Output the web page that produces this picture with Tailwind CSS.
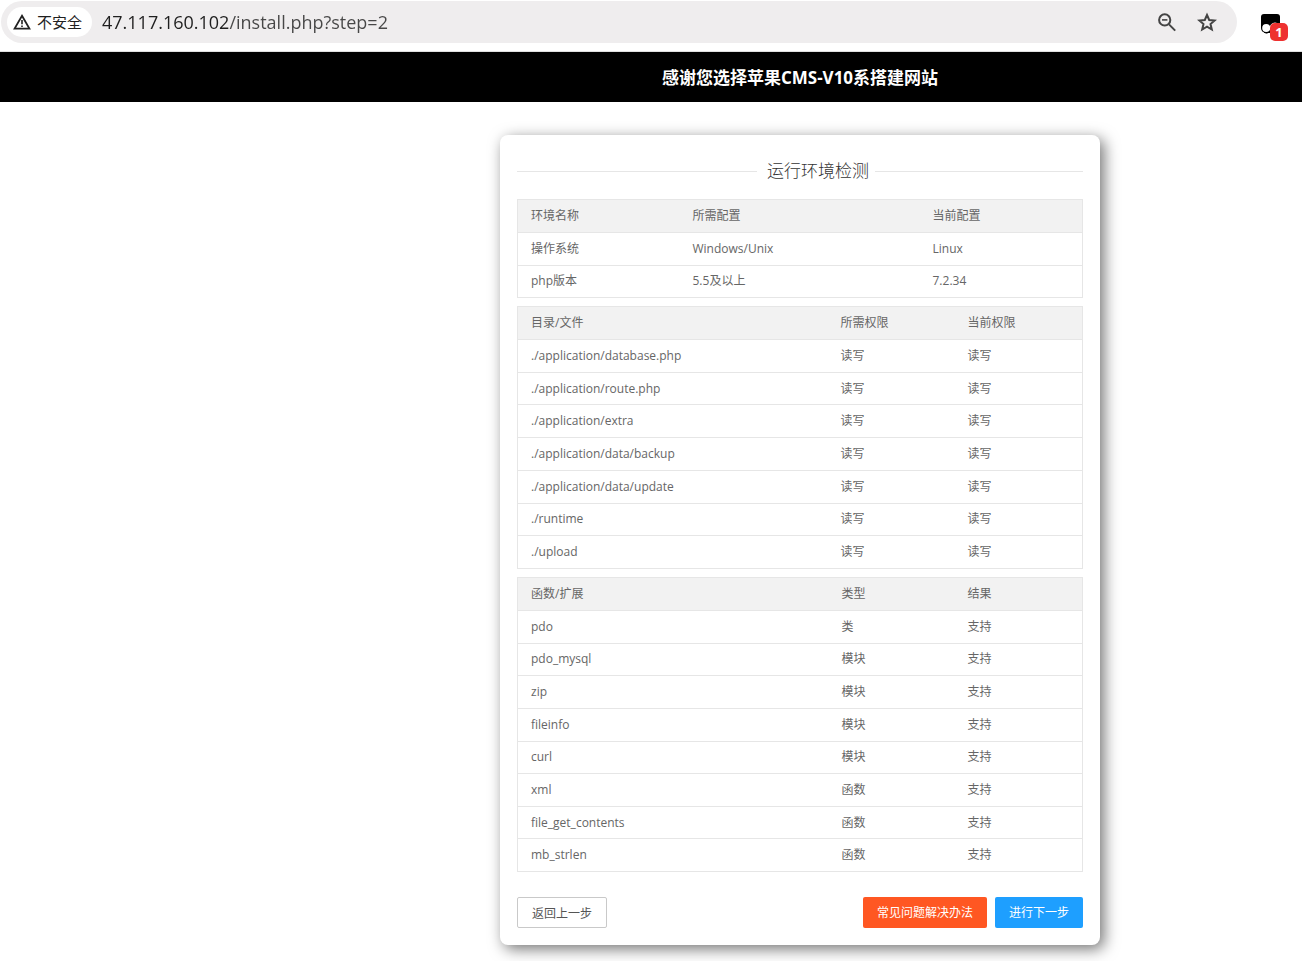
<!DOCTYPE html>
<html lang="zh-CN">
<head>
  <meta charset="UTF-8" />
  <title>运行环境检测</title>
  <script src="https://cdn.jsdelivr.net/npm/@tailwindcss/browser@4"></script>
</head>
<body class="bg-white overflow-x-hidden font-['Open_Sans','Noto_Sans_CJK_SC',sans-serif] text-[#666]">

  <!-- Address bar -->
  <div class="flex items-start gap-6 pt-px pl-px pr-3 h-[52px] border-b border-[#e0e0e0]">
    <div class="flex flex-1 items-center h-[42px] rounded-full bg-[#efedee] pl-1.5 pr-5">
      <button type="button" class="flex items-center gap-1.5 h-[30px] rounded-full bg-white pl-1.5 pr-2.5 text-[15px] leading-[30px] text-[#1f1f1f]">
        <svg class="w-[18px] h-4" viewBox="0 0 18 16" fill="none" stroke="#222" stroke-width="1.8">
          <path d="M9 1.8 16.4 14.6H1.6Z" />
          <path d="M9 6v4.2M9 11.4v1.6" stroke-width="1.6" />
        </svg>
        不安全
      </button>
      <!-- host part is darker than the path -->
      <input type="text" aria-label="地址" value="47.117.160.102/install.php?step=2" class="flex-1 h-[42px] pl-2.5 text-lg leading-[42px] outline-none text-transparent bg-clip-text bg-[linear-gradient(90deg,#1f1f1f_137px,#474747_137px)]" />
      <button type="button" aria-label="缩放" class="mr-5">
        <svg class="size-5" viewBox="0 0 20 20" fill="none" stroke="#444" stroke-width="2">
          <circle cx="7.7" cy="7.9" r="5.6" />
          <path d="M12 12.4l6.2 6.2" />
          <path d="M5 7.9h5.4" stroke-width="1.6" />
        </svg>
      </button>
      <button type="button" aria-label="收藏">
        <svg class="size-5" viewBox="0 0 20 20" fill="none" stroke="#444" stroke-width="2">
          <path d="M10 3l2.2 5 5.5.5-4.2 3.6 1.3 5.4-4.8-2.9-4.8 2.9 1.3-5.4L2.3 8.5l5.5-.5Z" />
        </svg>
      </button>
    </div>
    <button type="button" aria-label="扩展程序" class="relative flex items-start pt-0.5 mt-[11px] w-[29px] h-7">
      <svg class="size-5" viewBox="0 0 20 20">
        <path d="M3 0h13a3 3 0 0 1 3 3v13a3 3 0 0 1-3 3H5a5 5 0 0 1-5-5V3a3 3 0 0 1 3-3Z" fill="#000" />
        <circle cx="5.2" cy="14" r="4" fill="#fff" />
        <circle cx="14" cy="14" r="5.4" fill="#fff" />
        <path d="M3 18.3a4.5 4.5 0 0 0 5 0" fill="none" stroke="#000" stroke-width="1" />
      </svg>
      <span class="absolute left-[9px] top-[11px] w-[18px] h-[18px] rounded-[5px] bg-[#ee3130] text-white text-[13px] leading-[18px] font-bold text-center">1</span>
    </button>
  </div>

  <!-- Installer, centred on a page at least 1600px wide -->
  <div class="min-w-[1600px]">
    <h1 class="h-[50px] bg-black text-white text-[17px] leading-[52px] font-bold text-center">感谢您选择苹果CMS-V10系搭建网站</h1>

    <main class="w-[600px] mx-auto mt-[33px] mb-4 px-[17px] pt-5 pb-[17px] rounded-lg bg-white shadow-[4px_4px_15px_rgba(0,0,0,0.55)]">
      <h2 class="flex items-center gap-1.5 text-[17px] leading-8 font-light text-[#333]">
        <span class="w-60 h-px bg-[#e6e6e6]"></span>
        <span class="pl-1">运行环境检测</span>
        <span class="flex-1 h-px bg-[#e6e6e6]"></span>
      </h2>

      <table class="w-full h-[99px] mt-3 table-fixed border border-[#e6e6e6] text-xs leading-5 text-left [&_tr]:border-b [&_tr]:border-[#e6e6e6] [&_td]:px-[13px] [&_th]:px-[13px] [&_th]:h-[33px] [&_th]:font-normal">
        <colgroup><col class="w-[162px]" /><col class="w-60" /><col /></colgroup>
        <thead class="bg-[#f2f2f2]">
          <tr><th>环境名称</th><th>所需配置</th><th>当前配置</th></tr>
        </thead>
        <tbody>
          <tr><td>操作系统</td><td>Windows/Unix</td><td>Linux</td></tr>
          <tr><td>php版本</td><td>5.5及以上</td><td>7.2.34</td></tr>
        </tbody>
      </table>

      <table class="w-full h-[263px] mt-2 table-fixed border border-[#e6e6e6] text-xs leading-5 text-left [&_tr]:border-b [&_tr]:border-[#e6e6e6] [&_td]:px-[13px] [&_th]:px-[13px] [&_th]:h-[33px] [&_th]:font-normal">
        <colgroup><col class="w-[310px]" /><col class="w-[127px]" /><col /></colgroup>
        <thead class="bg-[#f2f2f2]">
          <tr><th>目录/文件</th><th>所需权限</th><th>当前权限</th></tr>
        </thead>
        <tbody>
          <tr><td>./application/database.php</td><td>读写</td><td>读写</td></tr>
          <tr><td>./application/route.php</td><td>读写</td><td>读写</td></tr>
          <tr><td>./application/extra</td><td>读写</td><td>读写</td></tr>
          <tr><td>./application/data/backup</td><td>读写</td><td>读写</td></tr>
          <tr><td>./application/data/update</td><td>读写</td><td>读写</td></tr>
          <tr><td>./runtime</td><td>读写</td><td>读写</td></tr>
          <tr><td>./upload</td><td>读写</td><td>读写</td></tr>
        </tbody>
      </table>

      <table class="w-full h-[295px] mt-2 table-fixed border border-[#e6e6e6] text-xs leading-5 text-left [&_tr]:border-b [&_tr]:border-[#e6e6e6] [&_td]:px-[13px] [&_th]:px-[13px] [&_th]:h-[33px] [&_th]:font-normal">
        <colgroup><col class="w-[311px]" /><col class="w-[126px]" /><col /></colgroup>
        <thead class="bg-[#f2f2f2]">
          <tr><th>函数/扩展</th><th>类型</th><th>结果</th></tr>
        </thead>
        <tbody>
          <tr><td>pdo</td><td>类</td><td>支持</td></tr>
          <tr><td>pdo_mysql</td><td>模块</td><td>支持</td></tr>
          <tr><td>zip</td><td>模块</td><td>支持</td></tr>
          <tr><td>fileinfo</td><td>模块</td><td>支持</td></tr>
          <tr><td>curl</td><td>模块</td><td>支持</td></tr>
          <tr><td>xml</td><td>函数</td><td>支持</td></tr>
          <tr><td>file_get_contents</td><td>函数</td><td>支持</td></tr>
          <tr><td>mb_strlen</td><td>函数</td><td>支持</td></tr>
        </tbody>
      </table>

      <div class="flex gap-2 mt-[25px] text-xs leading-[31px]">
        <button type="button" class="h-[31px] px-3.5 mr-auto rounded-xs border border-[#c9c9c9] bg-white text-[#555]">返回上一步</button>
        <a href="#" class="h-[31px] px-3.5 rounded-xs bg-[#ff5722] text-white">常见问题解决办法</a>
        <button type="button" class="h-[31px] px-3.5 rounded-xs bg-[#1e9fff] text-white">进行下一步</button>
      </div>
    </main>
  </div>
</body>
</html>
